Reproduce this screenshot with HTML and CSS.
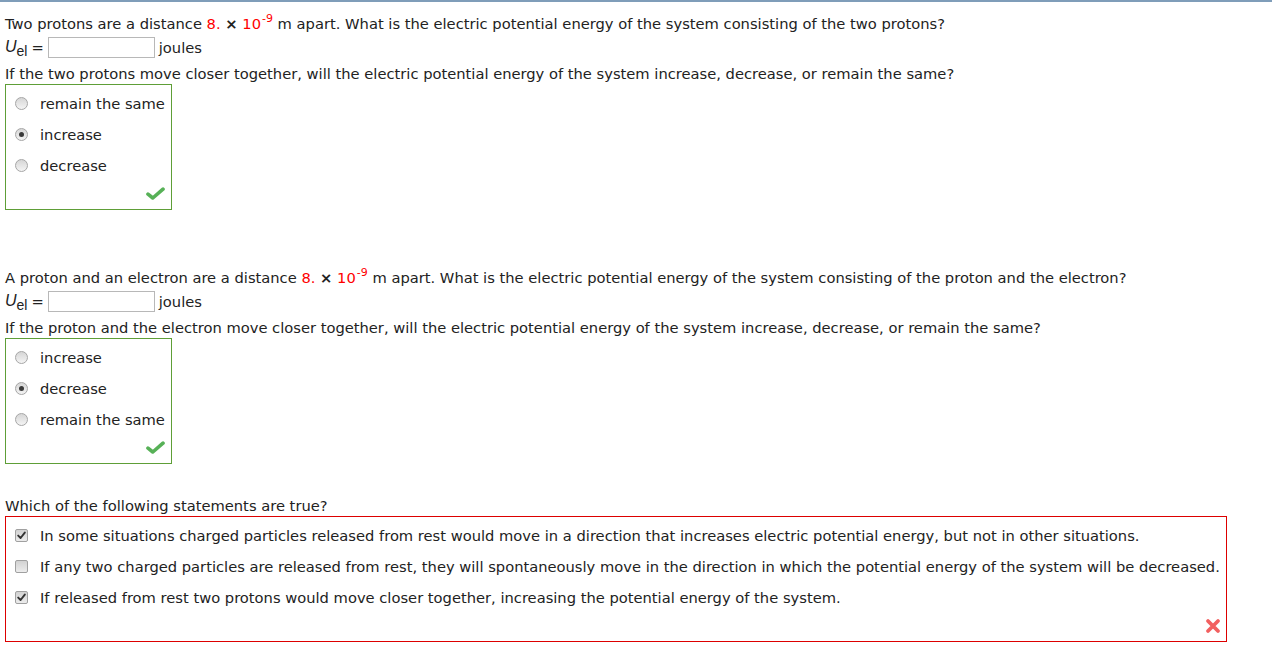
FILE: index.html
```html
<!DOCTYPE html>
<html lang="en">
<head>
<meta charset="utf-8">
<title>Electric potential energy</title>
<link rel="stylesheet" href="styles.css">
</head>
<body>
<main class="sheet">

  <section class="question q-first">
    <p class="prompt">Two protons are a distance <span class="given">8.</span> <span class="times">×</span> <span class="given">10<sup>-9</sup></span> m apart. What is the electric potential energy of the system consisting of the two protons?</p>
    <div class="answer-line">
      <span class="sym"><i>U</i><sub>el</sub></span>
      <span class="eq">=</span>
      <input class="num" type="text" aria-label="electric potential energy">
      <span class="unit">joules</span>
    </div>
    <p class="prompt sub">If the two protons move closer together, will the electric potential energy of the system increase, decrease, or remain the same?</p>
    <div class="choices correct">
      <div class="choice"><span class="radio"></span><span>remain the same</span></div>
      <div class="choice"><span class="radio on"></span><span>increase</span></div>
      <div class="choice"><span class="radio"></span><span>decrease</span></div>
      <div class="mark">
        <svg class="tick" width="19" height="13" viewBox="0 0 19 13"><path d="M2 7.2 L6.8 11 L17 2.2" fill="none" stroke="#57b157" stroke-width="3.6" stroke-linecap="round" stroke-linejoin="round"/></svg>
      </div>
    </div>
  </section>

  <section class="question q-second">
    <p class="prompt">A proton and an electron are a distance <span class="given">8.</span> <span class="times">×</span> <span class="given">10<sup>-9</sup></span> m apart. What is the electric potential energy of the system consisting of the proton and the electron?</p>
    <div class="answer-line">
      <span class="sym"><i>U</i><sub>el</sub></span>
      <span class="eq">=</span>
      <input class="num" type="text" aria-label="electric potential energy">
      <span class="unit">joules</span>
    </div>
    <p class="prompt sub">If the proton and the electron move closer together, will the electric potential energy of the system increase, decrease, or remain the same?</p>
    <div class="choices correct">
      <div class="choice"><span class="radio"></span><span>increase</span></div>
      <div class="choice"><span class="radio on"></span><span>decrease</span></div>
      <div class="choice"><span class="radio"></span><span>remain the same</span></div>
      <div class="mark">
        <svg class="tick" width="19" height="13" viewBox="0 0 19 13"><path d="M2 7.2 L6.8 11 L17 2.2" fill="none" stroke="#57b157" stroke-width="3.6" stroke-linecap="round" stroke-linejoin="round"/></svg>
      </div>
    </div>
  </section>

  <section class="question q-third">
    <p class="prompt">Which of the following statements are true?</p>
    <div class="choices wrong">
      <div class="choice"><span class="checkbox"><svg width="9" height="9" viewBox="0 0 9 9"><path d="M1.2 4.6 L3.6 7 L7.8 1.6" fill="none" stroke="#333" stroke-width="1.9" stroke-linecap="round" stroke-linejoin="round"/></svg></span><span>In some situations charged particles released from rest would move in a direction that increases electric potential energy, but not in other situations.</span></div>
      <div class="choice"><span class="checkbox"></span><span>If any two charged particles are released from rest, they will spontaneously move in the direction in which the potential energy of the system will be decreased.</span></div>
      <div class="choice"><span class="checkbox"><svg width="9" height="9" viewBox="0 0 9 9"><path d="M1.2 4.6 L3.6 7 L7.8 1.6" fill="none" stroke="#333" stroke-width="1.9" stroke-linecap="round" stroke-linejoin="round"/></svg></span><span>If released from rest two protons would move closer together, increasing the potential energy of the system.</span></div>
      <div class="mark">
        <svg class="cross" width="16" height="16" viewBox="0 0 16 16"><path d="M3 3 L13 13 M13 3 L3 13" fill="none" stroke="#f26060" stroke-width="3.8" stroke-linecap="round"/></svg>
      </div>
    </div>
  </section>

</main>
</body>
</html>
```

FILE: styles.css
```css
html, body {
  margin: 0;
  padding: 0;
  background: #fff;
}

body {
  border-top: 2px solid #7f9db9;
  font-family: "DejaVu Sans", Verdana, sans-serif;
  font-size: 14.7px;
  color: #222;
}

.sheet {
  padding: 11px 0 0 5px;
}

.prompt {
  margin: 0;
  line-height: 22px;
  white-space: nowrap;
}

.prompt.sub {
  margin-top: 4px;
  line-height: 21px;
}

.given {
  color: #f00;
}

.times {
  font-weight: bold;
}

sup {
  font-size: 11px;
  line-height: 0;
  vertical-align: 7px;
  margin-left: 1px;
}

.answer-line {
  display: flex;
  align-items: center;
  height: 24px;
}

.sym {
  font-family: "Liberation Sans", Arial, sans-serif;
  font-size: 16px;
}

.sym sub {
  font-size: 14px;
  line-height: 0;
  vertical-align: -4px;
}

.eq {
  margin-left: 4px;
  margin-right: 4px;
}

.num {
  box-sizing: border-box;
  width: 107px;
  height: 21px;
  margin: 0 4px 0 0;
  padding: 0 3px;
  border: 1px solid #b8b8b8;
  font: inherit;
}

.choices {
  box-sizing: border-box;
  width: fit-content;
  height: 126px;
  padding: 3px 6px 0 9px;
  display: flex;
  flex-direction: column;
}

.choices.correct {
  border: 1px solid #5e9e37;
}

.choices.wrong {
  border: 1px solid #d00;
}

.choice {
  display: flex;
  align-items: center;
  height: 31px;
  white-space: nowrap;
}

.radio {
  box-sizing: border-box;
  flex: none;
  width: 13px;
  height: 13px;
  margin-right: 12px;
  border-radius: 50%;
  border: 1px solid #a6a6a6;
  background: linear-gradient(#d6d6d6, #f4f4f4);
  position: relative;
}

.radio.on::after {
  content: "";
  position: absolute;
  left: 3px;
  top: 3px;
  width: 5px;
  height: 5px;
  border-radius: 50%;
  background: #3a3a3a;
}

.checkbox {
  box-sizing: border-box;
  flex: none;
  width: 13px;
  height: 13px;
  margin-right: 12px;
  border-radius: 2px;
  border: 1px solid #a0a0a0;
  background: linear-gradient(#d2d2d2, #ececec);
  display: flex;
  align-items: center;
  justify-content: center;
}

.mark {
  flex: 1;
  display: flex;
  justify-content: flex-end;
  align-items: flex-end;
  padding-bottom: 9px;
}

.q-second {
  margin-top: 57px;
}

.q-third {
  margin-top: 31px;
}

.q-third .prompt {
  margin-bottom: -1px;
}

.cross {
  margin-right: -1px;
  margin-bottom: -2px;
}
```
